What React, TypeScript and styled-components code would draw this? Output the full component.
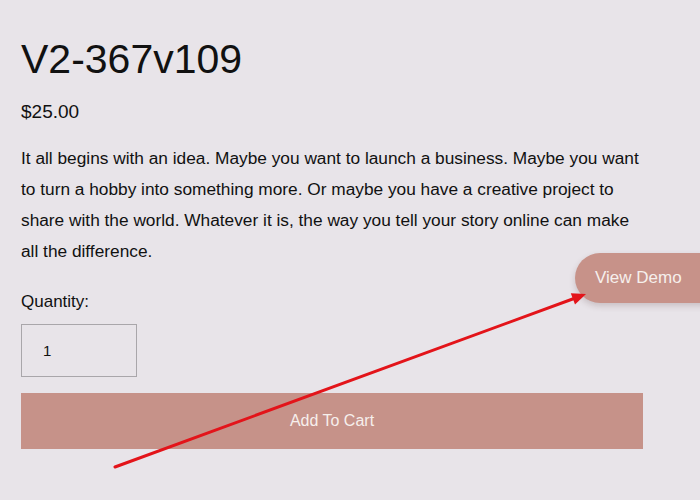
import React from "react";
import styled, { createGlobalStyle } from "styled-components";

const Global = createGlobalStyle`
  html, body {
    margin: 0;
    padding: 0;
    background: #e8e4e9;
  }
  body {
    font-family: "Liberation Sans", Arial, sans-serif;
    color: #111;
    overflow: hidden;
  }
`;

const Page = styled.div`
  position: relative;
  width: 700px;
  height: 500px;
  box-sizing: border-box;
  padding: 35px 0 0 21px;
  background: #e8e4e9;
  overflow: hidden;
`;

const Content = styled.div`
  width: 622px;
  display: flex;
  flex-direction: column;
  align-items: flex-start;
`;

const Title = styled.h1`
  margin: 0;
  font-size: 41px;
  line-height: 48px;
  font-weight: 400;
  color: #111;
`;

const Price = styled.div`
  margin-top: 17px;
  font-size: 19px;
  line-height: 24px;
`;

const Description = styled.p`
  margin: 19px 0 0;
  font-size: 17.3px;
  line-height: 31px;
`;

const Label = styled.label`
  margin-top: 23px;
  font-size: 17px;
  line-height: 24px;
`;

const QtyInput = styled.div`
  margin-top: 10px;
  width: 116px;
  height: 53px;
  box-sizing: border-box;
  border: 1px solid #a9a6aa;
  display: flex;
  align-items: center;
  padding-left: 21px;
  font-size: 15px;
`;

const CartButton = styled.button`
  margin-top: 16px;
  width: 622px;
  height: 56px;
  border: none;
  background: #c69289;
  color: #f6efec;
  font-family: "Liberation Sans", Arial, sans-serif;
  font-size: 16px;
  padding: 0;
`;

const DemoPill = styled.div`
  position: absolute;
  left: 575px;
  top: 253px;
  width: 150px;
  height: 50px;
  border-radius: 25px 0 0 25px;
  background: #c79289;
  color: #f6efec;
  font-size: 17px;
  display: flex;
  align-items: center;
  padding-left: 20px;
  box-sizing: border-box;
  box-shadow: 0 3px 6px rgba(80, 50, 50, 0.2);
`;

const Overlay = styled.svg`
  position: absolute;
  left: 0;
  top: 0;
  pointer-events: none;
`;

export default function App() {
  return (
    <>
      <Global />
      <Page>
        <Content>
          <Title>V2-367v109</Title>
          <Price>$25.00</Price>
          <Description>
            It all begins with an idea. Maybe you want to launch a business. Maybe you want to turn a hobby into
            something more. Or maybe you have a creative project to share with the world. Whatever it is, the way
            you tell your story online can make all the difference.
          </Description>
          <Label>Quantity:</Label>
          <QtyInput>1</QtyInput>
          <CartButton>Add To Cart</CartButton>
        </Content>
        <DemoPill>View Demo</DemoPill>
        <Overlay width={700} height={500} viewBox="0 0 700 500">
          <line x1={115} y1={467} x2={574} y2={298.5} stroke="#e3141a" strokeWidth={3} strokeLinecap="round" />
          <polygon points="586,294 575,304.6 570.8,293.2" fill="#e3141a" />
        </Overlay>
      </Page>
    </>
  );
}
